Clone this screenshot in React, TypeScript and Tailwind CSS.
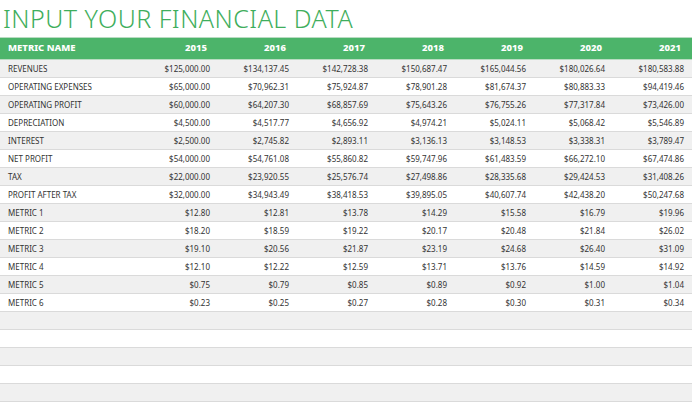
const YEARS = ["2015", "2016", "2017", "2018", "2019", "2020", "2021"];

const ROWS: [string, string[]][] = [
  ["REVENUES", ["$125,000.00", "$134,137.45", "$142,728.38", "$150,687.47", "$165,044.56", "$180,026.64", "$180,583.88"]],
  ["OPERATING EXPENSES", ["$65,000.00", "$70,962.31", "$75,924.87", "$78,901.28", "$81,674.37", "$80,883.33", "$94,419.46"]],
  ["OPERATING PROFIT", ["$60,000.00", "$64,207.30", "$68,857.69", "$75,643.26", "$76,755.26", "$77,317.84", "$73,426.00"]],
  ["DEPRECIATION", ["$4,500.00", "$4,517.77", "$4,656.92", "$4,974.21", "$5,024.11", "$5,068.42", "$5,546.89"]],
  ["INTEREST", ["$2,500.00", "$2,745.82", "$2,893.11", "$3,136.13", "$3,148.53", "$3,338.31", "$3,789.47"]],
  ["NET PROFIT", ["$54,000.00", "$54,761.08", "$55,860.82", "$59,747.96", "$61,483.59", "$66,272.10", "$67,474.86"]],
  ["TAX", ["$22,000.00", "$23,920.55", "$25,576.74", "$27,498.86", "$28,335.68", "$29,424.53", "$31,408.26"]],
  ["PROFIT AFTER TAX", ["$32,000.00", "$34,943.49", "$38,418.53", "$39,895.05", "$40,607.74", "$42,438.20", "$50,247.68"]],
  ["METRIC 1", ["$12.80", "$12.81", "$13.78", "$14.29", "$15.58", "$16.79", "$19.96"]],
  ["METRIC 2", ["$18.20", "$18.59", "$19.22", "$20.17", "$20.48", "$21.84", "$26.02"]],
  ["METRIC 3", ["$19.10", "$20.56", "$21.87", "$23.19", "$24.68", "$26.40", "$31.09"]],
  ["METRIC 4", ["$12.10", "$12.22", "$12.59", "$13.71", "$13.76", "$14.59", "$14.92"]],
  ["METRIC 5", ["$0.75", "$0.79", "$0.85", "$0.89", "$0.92", "$1.00", "$1.04"]],
  ["METRIC 6", ["$0.23", "$0.25", "$0.27", "$0.28", "$0.30", "$0.31", "$0.34"]],
];

const GRID = "grid grid-cols-[134px_repeat(7,79px)] w-[692px]";

export default function App() {
  return (
    <div className="w-[700px] h-[417px] overflow-hidden bg-white font-['Open_Sans','Liberation_Sans',sans-serif]">
      <h1 className="h-[37px] pl-[3px] pt-[4px] text-[25px] leading-[28px] font-light text-[#3fae5c] tracking-[0.5px]">
        INPUT YOUR FINANCIAL DATA
      </h1>
      <div className={`${GRID} h-[23px] items-center bg-[#4cb46a] border-y border-[#b9dcc2] text-white text-[9.5px] font-extrabold`}>
        <div className="pl-[8px]">METRIC NAME</div>
        {YEARS.map((y) => (
          <div key={y} className="text-right pr-[6px]">{y}</div>
        ))}
      </div>
      {ROWS.map(([name, vals], i) => (
        <div
          key={name}
          className={`${GRID} h-[18px] items-center border-b border-[#dadada] text-[8px] text-[#333] ${i % 2 === 0 ? "bg-[#f0f0f0]" : "bg-white"}`}
        >
          <div className="pl-[8px]">{name}</div>
          {vals.map((v, j) => (
            <div key={j} className="text-right pr-[3px]">{v}</div>
          ))}
        </div>
      ))}
      {[0, 1, 2, 3, 4, 5].map((i) => (
        <div
          key={i}
          className={`w-[692px] h-[18px] border-b border-[#dadada] ${i % 2 === 0 ? "bg-[#f0f0f0]" : "bg-white"}`}
        />
      ))}
    </div>
  );
}
